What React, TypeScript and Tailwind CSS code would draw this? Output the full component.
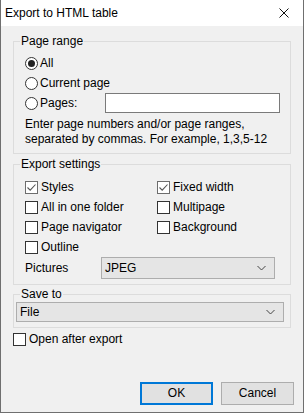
import React from 'react';

const Radio = ({ checked, label }: { checked?: boolean; label: string }) => (
  <div className="flex items-center gap-[2px] h-[20px]">
    <span className="w-[13px] h-[13px] rounded-full border border-[#333333] bg-white flex items-center justify-center">
      {checked && <span className="w-[7px] h-[7px] rounded-full bg-[#222222]" />}
    </span>
    <span>{label}</span>
  </div>
);

const Check = ({ checked, label }: { checked?: boolean; label: string }) => (
  <div className="flex items-center gap-[3px] h-[20px]">
    <span
      className={`w-[13px] h-[13px] border bg-white flex items-center justify-center ${
        checked ? 'border-[#6d6d6d]' : 'border-[#333333]'
      }`}
    >
      {checked && (
        <svg width="11" height="11" viewBox="0 0 11 11" fill="none">
          <path d="M1.5 5.5 L4.2 8.2 L9.5 2.5" stroke="#555555" strokeWidth="1.1" />
        </svg>
      )}
    </span>
    <span>{label}</span>
  </div>
);

const Chevron = () => (
  <svg width="9" height="6" viewBox="0 0 9 6" fill="none">
    <path d="M0.5 1 L4.5 5 L8.5 1" stroke="#444444" strokeWidth="1" />
  </svg>
);

const Select = ({ value, className }: { value: string; className: string }) => (
  <div
    className={`flex items-center justify-between bg-[#e5e5e5] border border-[#adadad] pl-[3px] pr-[8px] ${className}`}
  >
    <span>{value}</span>
    <Chevron />
  </div>
);

export default function App() {
  return (
    <div className="w-[304px] h-[413px] flex flex-col bg-[#f0f0f0] border-x border-b border-[#6f6f6f] text-[12px] leading-[15px] text-black font-['Segoe_UI','Liberation_Sans',Arial,sans-serif]">
      <div className="h-[26px] shrink-0 bg-white flex items-center justify-between pl-[4px] pr-[14px]">
        <span>Export to HTML table</span>
        <svg width="10" height="10" viewBox="0 0 10 10" fill="none">
          <path d="M0.5 0.5 L9.5 9.5 M9.5 0.5 L0.5 9.5" stroke="#111111" strokeWidth="1" />
        </svg>
      </div>

      <div className="flex-1 flex flex-col px-[12px] pt-[15px] pb-[7px]">
        {/* Page range */}
        <div className="relative h-[113px] border border-[#dcdcdc] pt-[11px] pl-[11px] pr-[10px]">
          <span className="absolute -top-[8px] left-[6px] px-[1px] bg-[#f0f0f0]">Page range</span>
          <Radio checked label="All" />
          <Radio label="Current page" />
          <div className="flex items-center justify-between">
            <Radio label="Pages:" />
            <div className="w-[175px] h-[20px] bg-white border border-[#7a7a7a]" />
          </div>
          <p className="mt-[4px]">
            Enter page numbers and/or page ranges,
            <br />
            separated by commas. For example, 1,3,5-12
          </p>
        </div>

        {/* Export settings */}
        <div className="relative mt-[10px] h-[121px] border border-[#dcdcdc] pt-[12px] pl-[11px] pr-[15px]">
          <span className="absolute -top-[8px] left-[6px] px-[1px] bg-[#f0f0f0]">Export settings</span>
          <div className="grid grid-cols-[132px_1fr]">
            <Check checked label="Styles" />
            <Check checked label="Fixed width" />
            <Check label="All in one folder" />
            <Check label="Multipage" />
            <Check label="Page navigator" />
            <Check label="Background" />
            <Check label="Outline" />
          </div>
          <div className="flex items-center">
            <span className="w-[76px]">Pictures</span>
            <Select value="JPEG" className="w-[174px] h-[22px]" />
          </div>
        </div>

        {/* Save to */}
        <div className="relative mt-[9px] border border-[#dcdcdc] pt-[7px] pb-[5px] pl-[2px]">
          <span className="absolute -top-[8px] left-[6px] px-[1px] bg-[#f0f0f0]">Save to</span>
          <Select value="File" className="w-[268px] h-[20px]" />
        </div>

        <div className="mt-[5px] flex items-center gap-[3px] h-[13px]">
          <span className="w-[13px] h-[13px] border border-[#333333] bg-white" />
          <span>Open after export</span>
        </div>

        <div className="mt-auto flex justify-end gap-[8px] -mr-[3px]">
          <button className="w-[73px] h-[23px] bg-[#e1e1e1] border-2 border-[#0078d7]">OK</button>
          <button className="w-[73px] h-[23px] bg-[#e1e1e1] border border-[#adadad]">Cancel</button>
        </div>
      </div>
    </div>
  );
}
